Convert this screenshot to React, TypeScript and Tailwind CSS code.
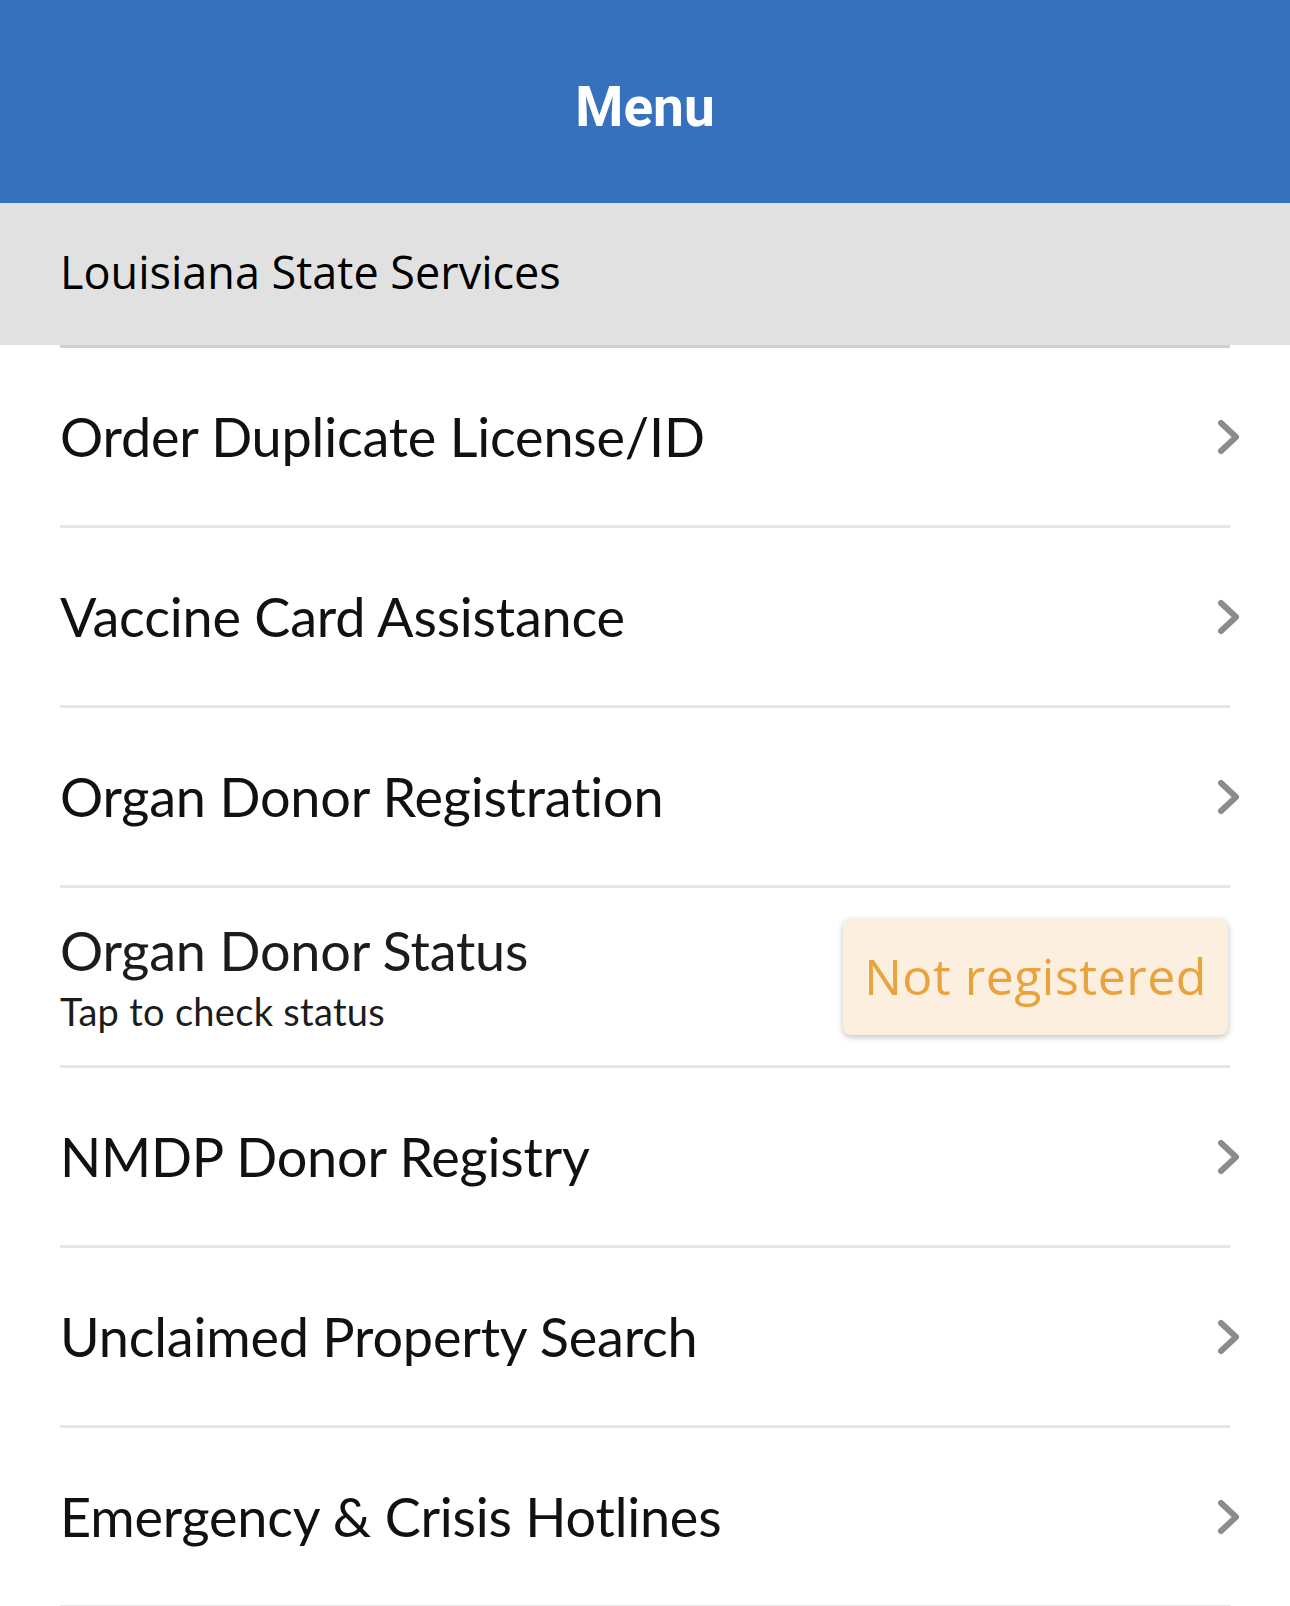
import React from 'react';

interface MenuRow {
  title: string;
  subtitle?: string;
  status?: string;
}

const rows: MenuRow[] = [
  { title: 'Order Duplicate License/ID' },
  { title: 'Vaccine Card Assistance' },
  { title: 'Organ Donor Registration' },
  { title: 'Organ Donor Status', subtitle: 'Tap to check status', status: 'Not registered' },
  { title: 'NMDP Donor Registry' },
  { title: 'Unclaimed Property Search' },
  { title: 'Emergency & Crisis Hotlines' },
];

const Chevron: React.FC = () => (
  <svg width="26" height="36" viewBox="0 0 26 36" fill="none" className="shrink-0">
    <path
      d="M5 4 L20 18 L5 32"
      stroke="#8c8c8c"
      strokeWidth="6"
      strokeLinecap="round"
      strokeLinejoin="round"
    />
  </svg>
);

const Row: React.FC<{ row: MenuRow }> = ({ row }) => (
  <div className="h-[177px] pl-[60px] pr-[48px] flex items-center justify-between">
    {row.subtitle ? (
      <div className="flex flex-col mt-[6px]">
        <span className="text-[54px] leading-[62px] text-[#1c1c1c] tracking-[-0.2px]">{row.title}</span>
        <span className="text-[38px] leading-[58px] text-[#1c1c1c] tracking-[0.3px]">{row.subtitle}</span>
      </div>
    ) : (
      <span className="text-[54px] leading-[66px] text-[#111111] tracking-[-0.2px]">{row.title}</span>
    )}
    {row.status ? (
      <div className="mr-[14px] w-[385px] h-[116px] rounded-[8px] bg-[#fcefdf] shadow-[0_2px_6px_rgba(0,0,0,0.25)] flex items-center justify-center">
        <span className="text-[50px] text-[#e8a33d] font-['Open_Sans',sans-serif] tracking-[0.5px]">{row.status}</span>
      </div>
    ) : (
      <Chevron />
    )}
  </div>
);

const App: React.FC = () => {
  return (
    <div className="w-[1290px] min-h-[1606px] bg-white font-['Lato',sans-serif]">
      <header className="h-[203px] bg-[#3671bd] flex items-center justify-center pt-[12px]">
        <h1 className="text-[55px] font-bold text-white font-['Roboto',sans-serif]">Menu</h1>
      </header>

      <div className="h-[142px] bg-[#e1e1e1] pl-[60px] pb-[4px] flex items-center">
        <span className="text-[45px] text-black font-['Open_Sans',sans-serif]">Louisiana State Services</span>
      </div>

      {rows.map((row, i) => (
        <div key={row.title}>
          <div className={`mx-[60px] h-[3px] ${i === 0 ? 'bg-[#d0d0d0]' : 'bg-[#e6e6e6]'}`} />
          <Row row={row} />
        </div>
      ))}
      <div className="mx-[60px] h-[3px] bg-[#e6e6e6]" />
    </div>
  );
};

export default App;
